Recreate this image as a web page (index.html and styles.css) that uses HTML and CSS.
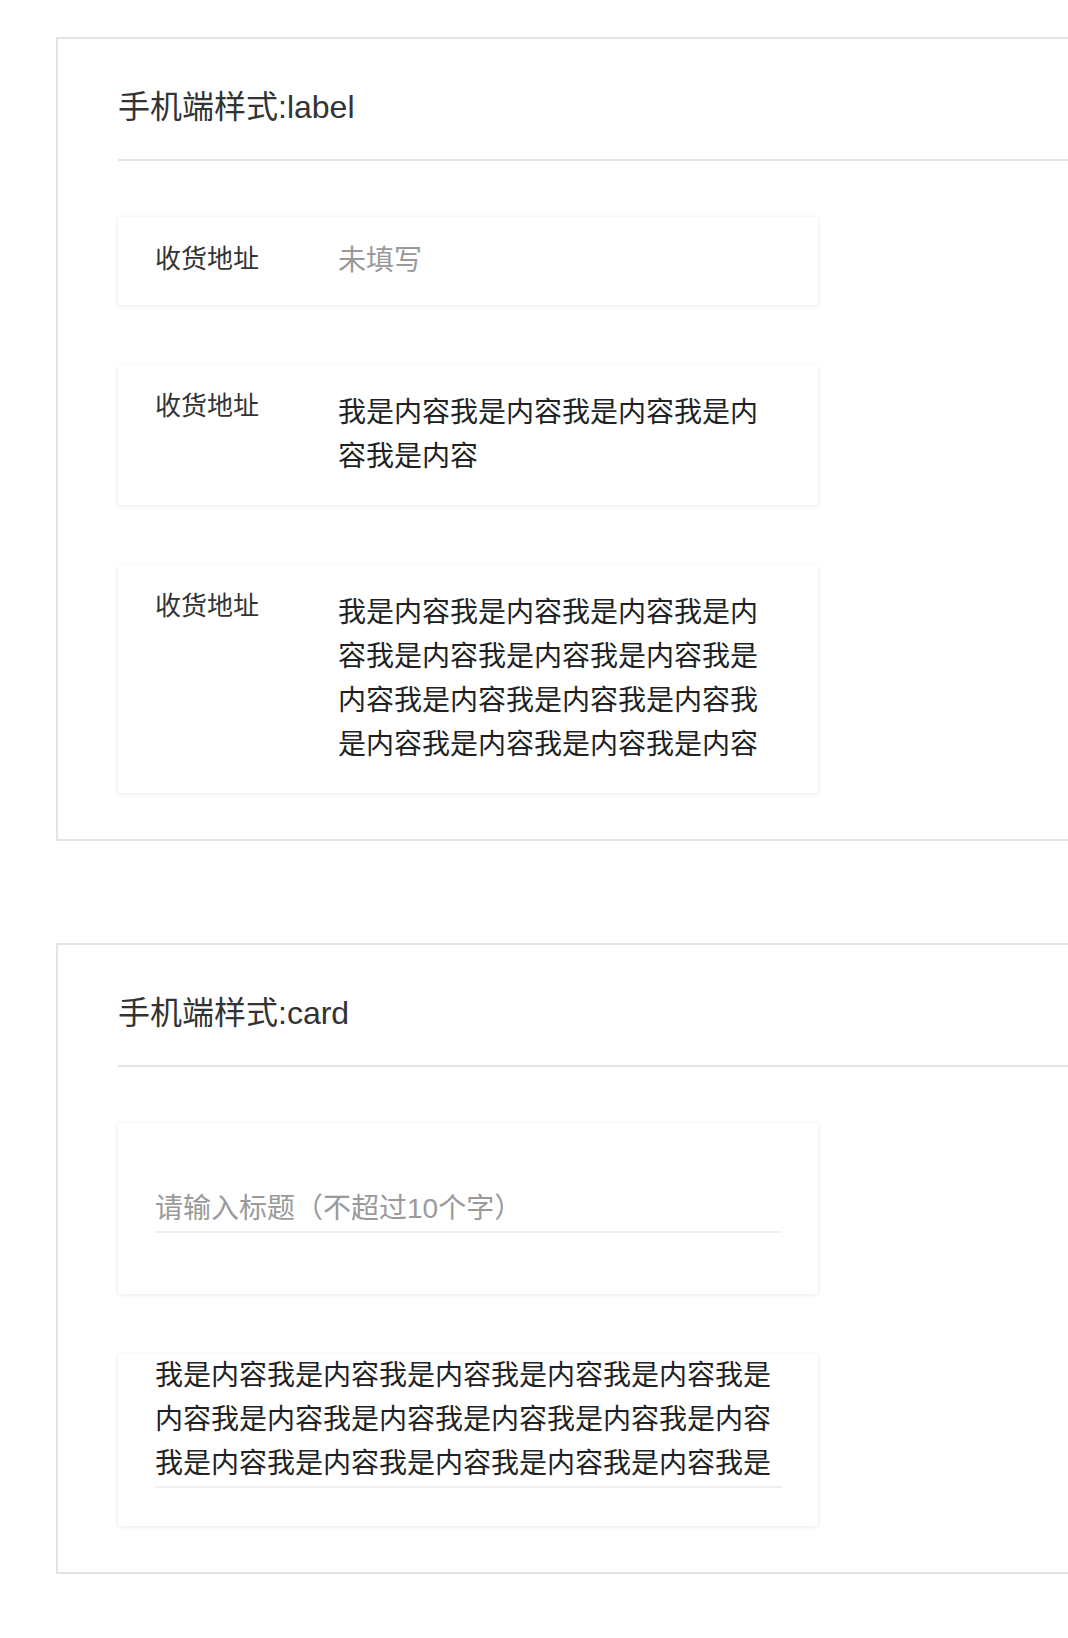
FILE: index.html
```html
<!DOCTYPE html>
<html lang="zh-CN">
<head>
    <meta charset="UTF-8">
    <meta name="viewport" content="width=device-width, initial-scale=1.0">
    <title>手机端样式</title>
    <link rel="stylesheet" href="styles.css">
</head>
<body>
    <div class="page">
        <!-- label style -->
        <section class="panel">
            <div class="panel-head">
                <h2>手机端样式:label</h2>
            </div>
            <div class="cards">
                <div class="card row single">
                    <span class="row-label">收货地址</span>
                    <span class="row-value empty">未填写</span>
                </div>
                <div class="card row">
                    <span class="row-label">收货地址</span>
                    <span class="row-value">我是内容我是内容我是内容我是内容我是内容</span>
                </div>
                <div class="card row">
                    <span class="row-label">收货地址</span>
                    <span class="row-value">我是内容我是内容我是内容我是内容我是内容我是内容我是内容我是内容我是内容我是内容我是内容我是内容我是内容我是内容我是内容</span>
                </div>
            </div>
        </section>

        <!-- card style -->
        <section class="panel">
            <div class="panel-head">
                <h2>手机端样式:card</h2>
            </div>
            <div class="cards">
                <div class="card title-card">
                    <div class="title-input">请输入标题（不超过10个字）</div>
                </div>
                <div class="card text-card">
                    <div class="text-area">我是内容我是内容我是内容我是内容我是内容我是内容我是内容我是内容我是内容我是内容我是内容我是内容我是内容我是内容我是内容我是内容我是</div>
                </div>
            </div>
        </section>
    </div>
</body>
</html>
```

FILE: styles.css
```css
html, body {
    margin: 0;
    padding: 0;
    background: #fff;
    color: #333;
    font-family: "Liberation Sans", "Noto Sans CJK SC", sans-serif;
}

/* panels are wider than the window, clip them here */
.page {
    padding: 37px 0 60px 56px;
    overflow: hidden;
}

/* Panels */
.panel {
    width: 1100px;
    border: 2px solid #e4e4e4;
    padding: 0 0 46px 60px;
}

.panel + .panel {
    margin-top: 102px;
}

.panel-head {
    padding-top: 46px;
    padding-bottom: 30px;
    border-bottom: 2px solid #e4e4e4;
}

.panel-head h2 {
    margin: 0;
    font-size: 32px;
    line-height: 44px;
    font-weight: normal;
    color: #333;
}

.cards {
    display: flex;
    flex-direction: column;
    gap: 60px;
    padding-top: 56px;
    width: 700px;
}

/* Cards */
.card {
    background: #fff;
    box-shadow: 0 1px 5px rgba(0, 0, 0, 0.09);
}

.row {
    display: flex;
    align-items: flex-start;
    padding: 26px 36px 26px 37px;
}

.row.single {
    align-items: center;
}

.row-label {
    flex: 0 0 183px;
    font-size: 26px;
    line-height: 30px;
    color: #333;
}

.row.single .row-label {
    margin-top: -4px;
}

.row-value {
    flex: 1;
    font-size: 28px;
    line-height: 44px;
    color: #222;
}

.row.single .row-value {
    line-height: 36px;
}

.row-value.empty {
    color: #999;
}

.title-card {
    padding: 64px 36px 61px 37px;
}

.title-input {
    font-size: 28px;
    line-height: 44px;
    color: #9a9a9a;
    border-bottom: 2px solid #f0f0f0;
}

.text-card {
    padding: 0 36px 38px 37px;
}

.text-area {
    font-size: 28px;
    line-height: 44px;
    color: #222;
    border-bottom: 2px solid #f0f0f0;
}
```
